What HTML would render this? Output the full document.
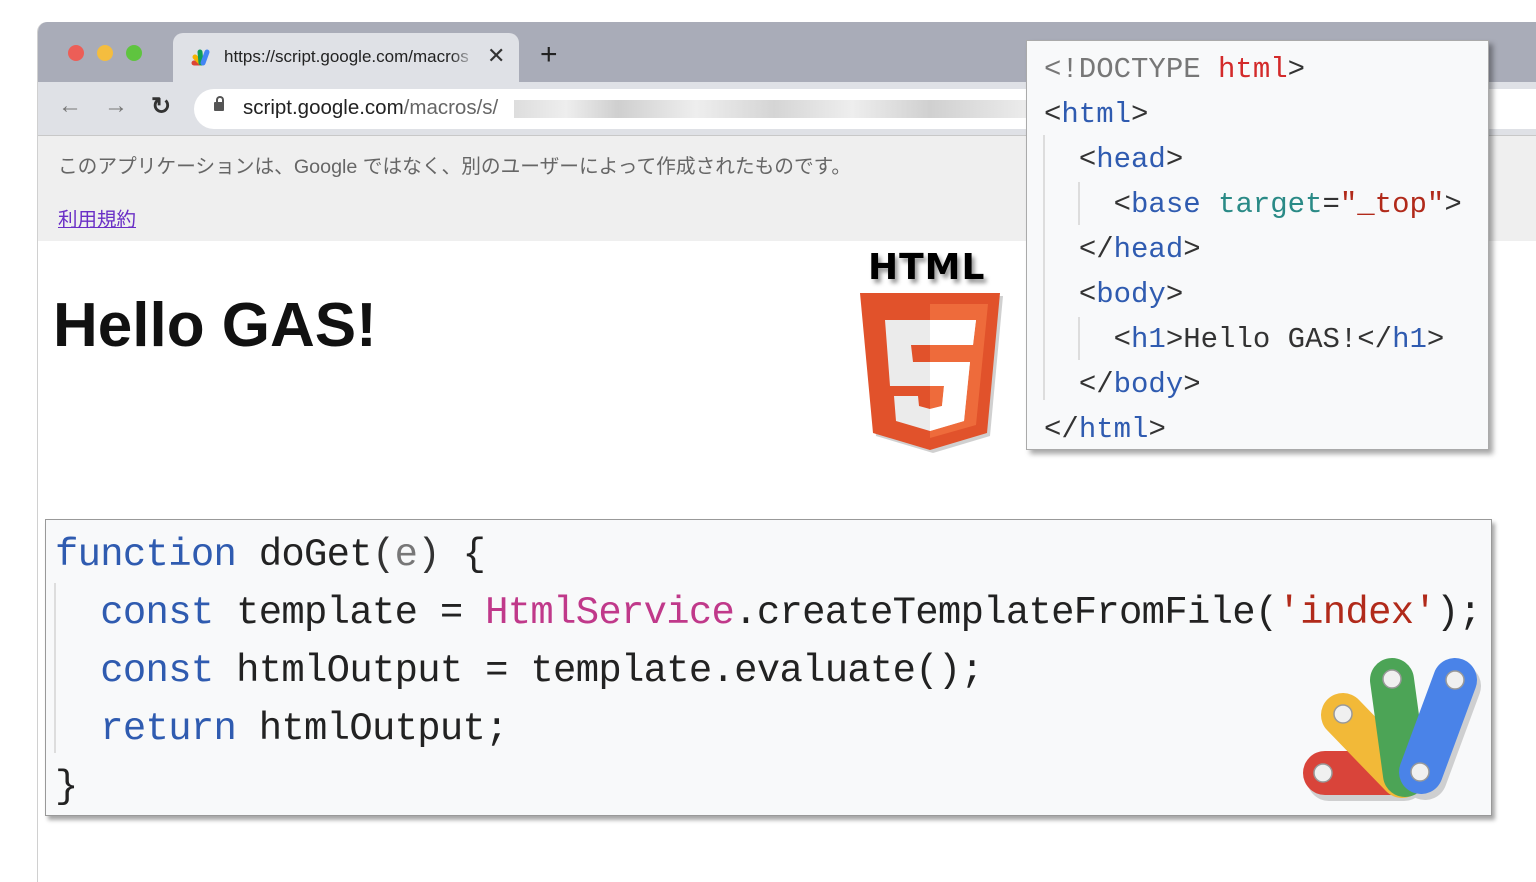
<!DOCTYPE html>
<html><head><meta charset="utf-8"><style>
body{margin:0;width:1536px;height:860px;background:#fff;position:relative;overflow:hidden;font-family:"Liberation Sans","Noto Sans CJK JP",sans-serif}
.abs{position:absolute}
.mono{font-family:"Liberation Mono","DejaVu Sans Mono",monospace;white-space:pre}
.b{color:#2f5bb0}.r{color:#d32a2a}.t{color:#2a8a86}.k{color:#333}.g{color:#777}.m{color:#c0398a}.dr{color:#b12a1a}
</style></head><body>
<div class="abs" style="left:37px;top:22px;width:1520px;height:860px;border-radius:10px 0 0 0;background:#fff;border-left:1px solid #d0d0d0;overflow:hidden">
 <div class="abs" style="left:0;top:0;width:1520px;height:60px;background:#a9acb8"></div>
 <div class="abs" style="left:30px;top:23px;width:16px;height:16px;border-radius:50%;background:#ec5e57"></div>
 <div class="abs" style="left:59px;top:23px;width:16px;height:16px;border-radius:50%;background:#f4bd3f"></div>
 <div class="abs" style="left:88px;top:23px;width:16px;height:16px;border-radius:50%;background:#5fc43f"></div>
 <div class="abs" style="left:135px;top:11px;width:346px;height:55px;background:#dfe1e6;border-radius:10px 10px 0 0"></div>
 <svg class="abs" style="left:152px;top:26px" width="22" height="20" viewBox="0 0 22 20"><line x1="4" y1="15" x2="11" y2="15" stroke="#db4437" stroke-width="5" stroke-linecap="round"/><line x1="5" y1="9" x2="11" y2="15" stroke="#f4b400" stroke-width="5" stroke-linecap="round"/><line x1="10" y1="4" x2="11" y2="15" stroke="#0f9d58" stroke-width="5" stroke-linecap="round"/><line x1="13" y1="15" x2="17" y2="4" stroke="#4285f4" stroke-width="5" stroke-linecap="round"/></svg>
 <div class="abs" style="left:186px;top:25px;font-size:17px;color:#222;width:252px;overflow:hidden;white-space:nowrap;-webkit-mask-image:linear-gradient(90deg,#000 90%,transparent)">https://script.google.com/macros</div>
 <div class="abs" style="left:449px;top:21px;font-size:22px;color:#333">✕</div>
 <div class="abs" style="left:502px;top:16px;font-size:30px;color:#222">+</div>
 <div class="abs" style="left:0;top:60px;width:1520px;height:53px;background:#dfe1e6;border-bottom:1px solid #c8c8c8"></div>
 <div class="abs" style="left:20px;top:70px;font-size:24px;color:#777">←</div>
 <div class="abs" style="left:66px;top:70px;font-size:24px;color:#777">→</div>
 <div class="abs" style="left:113px;top:70px;font-size:24px;color:#333;font-weight:bold">↻</div>
 <div class="abs" style="left:156px;top:67px;width:1400px;height:40px;background:#fff;border-radius:20px"></div>
 <div class="abs" style="left:176px;top:80px;width:10px;height:9px;background:#555;border-radius:1px"></div>
 <div class="abs" style="left:178px;top:74px;width:4px;height:6px;border:2px solid #555;border-bottom:none;border-radius:4px 4px 0 0"></div>
 <div class="abs" style="left:205px;top:74px;font-size:20.5px;color:#222">script.google.com<span style="color:#666">/macros/s/</span></div>
 <div class="abs" style="left:476px;top:78px;width:520px;height:18px;background:linear-gradient(90deg,#ddd,#eee 10%,#cfcfcf 20%,#eee 35%,#d5d5d5 50%,#eee 65%,#d0d0d0 80%,#eee)"></div>
 <div class="abs" style="left:0;top:114px;width:1520px;height:105px;background:#efefef"></div>
 <div class="abs" style="left:20px;top:128px;font-size:19.7px;color:#666;white-space:nowrap">このアプリケーションは、Google ではなく、別のユーザーによって作成されたものです。</div>
 <div class="abs" style="left:20px;top:181px;font-size:19.5px;color:#6a2fc6;text-decoration:underline">利用規約</div>
</div>
<div class="abs" style="left:53px;top:290px;font-size:62px;font-weight:bold;color:#111">Hello GAS!</div>
<div class="abs" style="left:868px;top:247px;font-size:36px;font-weight:900;color:#000;letter-spacing:1px;text-shadow:3px 4px 4px #999;font-family:'DejaVu Sans',sans-serif">HTML</div>
<svg class="abs" style="left:855px;top:288px" width="155" height="172" viewBox="0 0 155 172">
<g transform="translate(3,3)" opacity=".35"><path d="M5 5H145L132 145L75 162L18 145Z" fill="#777"/></g>
<path d="M5 5H145L132 145L75 162L18 145Z" fill="#e1522b"/>
<path d="M75 16V150L121 137L133 16Z" fill="#ee6b3b"/>
<path d="M30 32H121L118 57H56L58 74H115L109 133L75 143L41 133L39 108H63L64 118L75 121L87 118L89 98H35Z" fill="#ebebeb"/>
<path d="M75 32H121L118 57H75ZM75 74H115L109 133L75 143V121L87 118L89 98H75Z" fill="#fff"/>
</svg>
<div class="abs mono" style="left:1026px;top:40px;width:463px;height:410px;background:#f8f9fa;border:1px solid #aaa;box-shadow:4px 4px 5px rgba(0,0,0,.35);font-size:29px;line-height:45px;padding-top:6px;padding-left:17px;box-sizing:border-box"><span class="g">&lt;!DOCTYPE </span><span class="r">html</span><span class="k">&gt;</span>
<span class="k">&lt;</span><span class="b">html</span><span class="k">&gt;</span>
  <span class="k">&lt;</span><span class="b">head</span><span class="k">&gt;</span>
    <span class="k">&lt;</span><span class="b">base</span> <span class="t">target</span><span class="k">=</span><span class="dr">"_top"</span><span class="k">&gt;</span>
  <span class="k">&lt;/</span><span class="b">head</span><span class="k">&gt;</span>
  <span class="k">&lt;</span><span class="b">body</span><span class="k">&gt;</span>
    <span class="k">&lt;</span><span class="b">h1</span><span class="k">&gt;Hello GAS!&lt;/</span><span class="b">h1</span><span class="k">&gt;</span>
  <span class="k">&lt;/</span><span class="b">body</span><span class="k">&gt;</span>
<span class="k">&lt;/</span><span class="b">html</span><span class="k">&gt;</span></div>
<div class="abs" style="left:1043px;top:135px;width:2px;height:265px;background:#ddd"></div>
<div class="abs" style="left:1078px;top:182px;width:2px;height:43px;background:#ddd"></div>
<div class="abs" style="left:1078px;top:317px;width:2px;height:43px;background:#ddd"></div>
<div class="abs mono" style="left:45px;top:519px;width:1447px;height:297px;background:#f8f9fa;border:1px solid #999;box-shadow:3px 4px 4px rgba(0,0,0,.35);font-size:38.9px;letter-spacing:-0.7px;line-height:58px;padding-top:6px;padding-left:9px;box-sizing:border-box;color:#222"><span class="b">function</span> doGet<span class="k">(</span><span class="g">e</span><span class="k">)</span> {
  <span class="b">const</span> template = <span class="m">HtmlService</span>.createTemplateFromFile(<span class="dr">'index'</span>);
  <span class="b">const</span> htmlOutput = template.evaluate();
  <span class="b">return</span> htmlOutput;
}</div>
<div class="abs" style="left:54px;top:583px;width:2px;height:170px;background:#ddd"></div>
<svg class="abs" style="left:0;top:0" width="1536" height="860">
<g stroke-linecap="round" stroke-width="44" fill="none">
<g transform="translate(4,6)" opacity=".25" stroke="#555"><line x1="1325" y1="773" x2="1400" y2="773"/><line x1="1421" y1="772" x2="1455" y2="680"/></g>
<line x1="1325" y1="773" x2="1400" y2="773" stroke="#d9443a"/>
<line x1="1343" y1="715" x2="1402" y2="776" stroke="#f2b938"/>
<line x1="1392" y1="680" x2="1405" y2="775" stroke="#4ca456"/>
<line x1="1421" y1="772" x2="1455" y2="680" stroke="#4a83e8"/>
</g>
<g fill="#f0f0f0" stroke="#999" stroke-width="1.5"><circle cx="1323" cy="773" r="9"/><circle cx="1343" cy="714" r="9"/><circle cx="1392" cy="679" r="9"/><circle cx="1455" cy="680" r="9"/><circle cx="1420" cy="772" r="9"/></g>
</svg>
</body></html>
